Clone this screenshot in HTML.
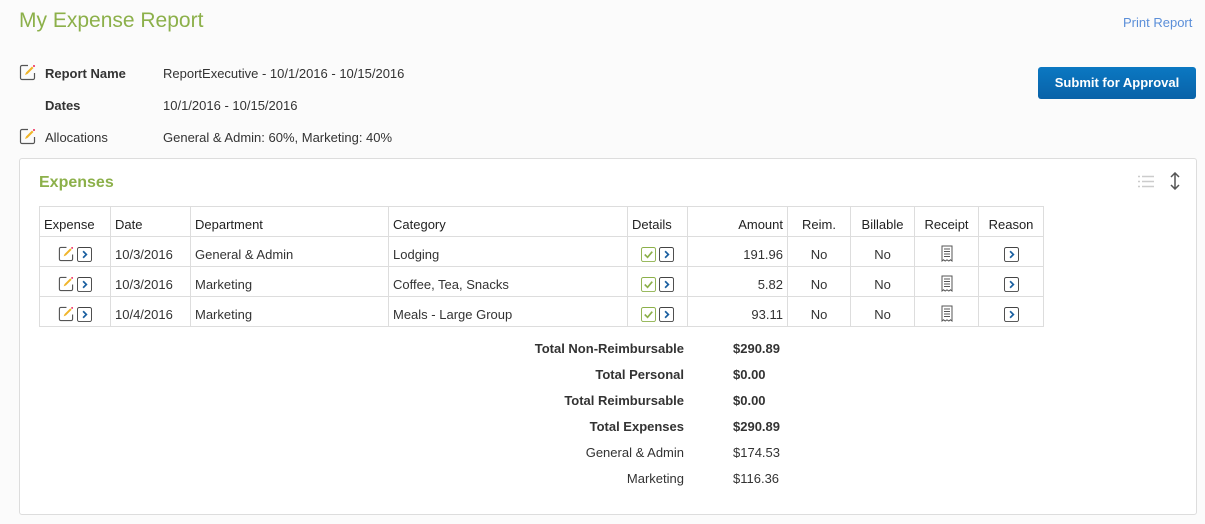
<!DOCTYPE html>
<html><head><style>
body{margin:0;background:#fbfbfb;font-family:"Liberation Sans",sans-serif;font-size:13px;color:#333;width:1205px;height:524px;position:relative;overflow:hidden}
.a{position:absolute}
h1{position:absolute;left:19px;top:9px;margin:0;font-weight:normal;font-size:21px;color:#8cb04a}
.pr{left:1123px;top:15px;color:#5b8fd9;font-size:13px}
.lbl{left:45px;font-weight:bold;color:#333}
.val{left:163px}
.btn{left:1038px;top:67px;width:158px;height:32px;border-radius:3px;background:linear-gradient(#0b78c2,#0962a8);color:#fff;font-weight:bold;text-align:center;line-height:32px;font-size:13px}
.panel{left:19px;top:158px;width:1176px;height:355px;background:#fff;border:1px solid #ddd;border-radius:3px}
.ph{left:39px;top:174px;font-size:16px;font-weight:bold;color:#8cb04a}
table{position:absolute;left:39px;top:206px;border-collapse:collapse;background:#fff}
td,th{border:1px solid #ddd;height:30px;padding:5px 4px 0;box-sizing:border-box;font-size:13px;font-weight:normal;text-align:left;white-space:nowrap;color:#333}
th{color:#222}
.c{text-align:center}.r{text-align:right}
svg{vertical-align:middle}
.tl{width:300px;text-align:right;left:384px;font-weight:bold}
.tv{left:733px;font-weight:bold}
.n{font-weight:normal}
</style></head><body>
<h1>My Expense Report</h1>
<div class="a pr">Print Report</div>
<svg class="a" style="left:19px;top:64px" width="17" height="17" viewBox="0 0 17 17"><path d="M9 1.5H3a1.5 1.5 0 0 0-1.5 1.5v11a1.5 1.5 0 0 0 1.5 1.5h11a1.5 1.5 0 0 0 1.5-1.5V9" fill="none" stroke="#555" stroke-width="1.2"/><path d="M6 11l1-2.5 6-6 1.5 1.5-6 6z" fill="#f0b429"/><circle cx="15" cy="2" r="1" fill="#e25"/></svg>
<div class="a lbl" style="top:66px">Report Name</div><div class="a val" style="top:66px">ReportExecutive - 10/1/2016 - 10/15/2016</div>
<div class="a lbl" style="top:98px">Dates</div><div class="a val" style="top:98px">10/1/2016 - 10/15/2016</div>
<svg class="a" style="left:19px;top:128px" width="17" height="17" viewBox="0 0 17 17"><path d="M9 1.5H3a1.5 1.5 0 0 0-1.5 1.5v11a1.5 1.5 0 0 0 1.5 1.5h11a1.5 1.5 0 0 0 1.5-1.5V9" fill="none" stroke="#555" stroke-width="1.2"/><path d="M6 11l1-2.5 6-6 1.5 1.5-6 6z" fill="#f0b429"/><circle cx="15" cy="2" r="1" fill="#e25"/></svg>
<div class="a lbl n" style="top:130px">Allocations</div><div class="a val" style="top:130px">General &amp; Admin: 60%, Marketing: 40%</div>
<div class="a btn">Submit for Approval</div>
<div class="a panel"></div>
<div class="a ph">Expenses</div>
<svg class="a" style="left:1137px;top:175px" width="18" height="13"><g stroke="#ccc" stroke-width="1.5"><path d="M1 1.5h2M5 1.5h12M1 6.5h2M5 6.5h12M1 11.5h2M5 11.5h12"/></g></svg>
<svg class="a" style="left:1169px;top:172px" width="12" height="18"><path d="M6 1v16M2 5l4-4 4 4M2 13l4 4 4-4" fill="none" stroke="#555" stroke-width="1.5"/></svg>
<table>
<tr><th style="width:71px">Expense</th><th style="width:80px">Date</th><th style="width:198px">Department</th><th style="width:239px">Category</th><th style="width:60px">Details</th><th class="r" style="width:100px">Amount</th><th class="c" style="width:63px">Reim.</th><th class="c" style="width:64px">Billable</th><th class="c" style="width:64px">Receipt</th><th class="c" style="width:65px">Reason</th></tr>
</table>
<script>
var E='<svg width="16" height="16" viewBox="0 0 17 17"><path d="M9 1.5H3a1.5 1.5 0 0 0-1.5 1.5v11a1.5 1.5 0 0 0 1.5 1.5h11a1.5 1.5 0 0 0 1.5-1.5V9" fill="none" stroke="#555" stroke-width="1.2"/><path d="M6 11l1-2.5 6-6 1.5 1.5-6 6z" fill="#f0b429"/><circle cx="15" cy="2" r="1" fill="#e25"/></svg>';
var A='<svg width="15" height="15" viewBox="0 0 16 16"><rect x="0.5" y="0.5" width="15" height="15" rx="2" fill="none" stroke="#444"/><path d="M6.5 4.5l3.5 3.5-3.5 3.5" fill="none" stroke="#1a5fa0" stroke-width="1.8"/></svg>';
var C='<svg width="15" height="15" viewBox="0 0 16 16"><rect x="0.5" y="0.5" width="15" height="15" rx="2" fill="none" stroke="#8cb04a"/><path d="M4 8l3 3 5-6" fill="none" stroke="#8cb04a" stroke-width="1.8"/></svg>';
var R='<svg width="12" height="18" viewBox="0 0 12 18"><path d="M1 1h10v15l-1.5-1.2-1.7 1.2-1.8-1.2-1.8 1.2-1.7-1.2L1 16z" fill="none" stroke="#555"/><path d="M3 4h6M3 6.5h6M3 9h6M3 11.5h6" stroke="#555"/></svg>';
var d=[["10/3/2016","General &amp; Admin","Lodging","191.96"],["10/3/2016","Marketing","Coffee, Tea, Snacks","5.82"],["10/4/2016","Marketing","Meals - Large Group","93.11"]];
var t=document.querySelector('table');
d.forEach(function(r){t.insertAdjacentHTML('beforeend','<tr><td class="c">'+E+' '+A+'</td><td>'+r[0]+'</td><td>'+r[1]+'</td><td>'+r[2]+'</td><td class="c">'+C+' '+A+'</td><td class="r">'+r[3]+'</td><td class="c">No</td><td class="c">No</td><td class="c">'+R+'</td><td class="c">'+A+'</td></tr>')});
</script>
<div class="a tl" style="top:341px">Total Non-Reimbursable</div><div class="a tv" style="top:341px">$290.89</div>
<div class="a tl" style="top:367px">Total Personal</div><div class="a tv" style="top:367px">$0.00</div>
<div class="a tl" style="top:393px">Total Reimbursable</div><div class="a tv" style="top:393px">$0.00</div>
<div class="a tl" style="top:419px">Total Expenses</div><div class="a tv" style="top:419px">$290.89</div>
<div class="a tl n" style="top:445px">General &amp; Admin</div><div class="a tv n" style="top:445px">$174.53</div>
<div class="a tl n" style="top:471px">Marketing</div><div class="a tv n" style="top:471px">$116.36</div>
</body></html>
